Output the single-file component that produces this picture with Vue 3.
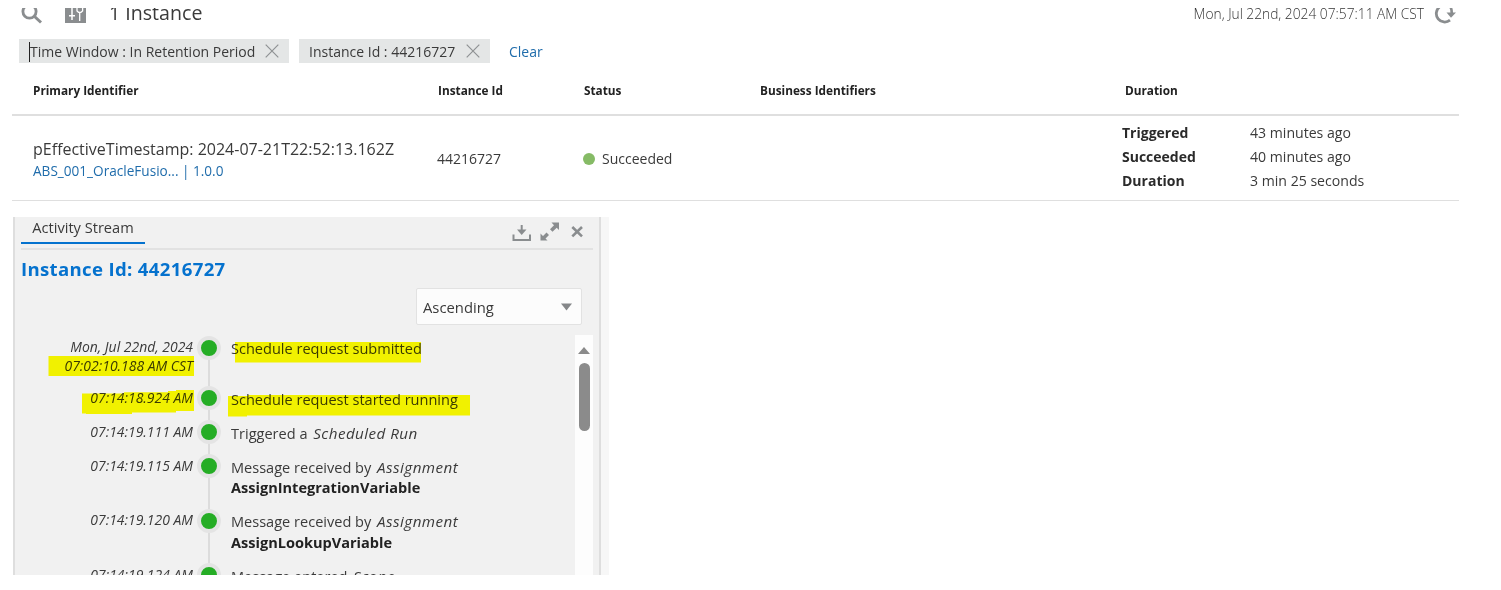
<template>
    <div class="page">
        <header class="topbar">
            <svg class="ico-search" width="22" height="24" viewBox="0 0 22 24">
                <circle cx="8.5" cy="7.5" r="6.600" fill="none" stroke="#8a8d8f" stroke-width="2.800" />
                <path d="M13 12L20 18.500" stroke="#8a8d8f" stroke-width="3" />
            </svg>
            <svg class="ico-filter" width="22" height="24" viewBox="0 0 22 24">
                <rect x="0" y="0" width="21" height="19" fill="#8a8d8f" />
                <path d="M7 0V16M4 11.700H10" fill="none" stroke="#fff" stroke-width="1.500" />
                <path d="M14.700 8V17M12 3V7L13.500 8.300H16L17.600 7V3" fill="none" stroke="#fff" stroke-width="1.300" />
            </svg>
            <h1 class="title">1 Instance</h1>
            <span class="now">Mon, Jul 22nd, 2024 07:57:11 AM CST</span>
            <svg class="ico-refresh" width="24" height="24" viewBox="0 0 24 24">
                <path d="M6.500 3A8.200 8.200 0 1 0 17 16.200" fill="none" stroke="#8a8d8f" stroke-width="2.800" />
                <path d="M16.500 2Q19 4 18.700 10" fill="none" stroke="#8a8d8f" stroke-width="2.600" />
                <path d="M13.500 8.500H23L18 13.800Z" fill="#8a8d8f" />
            </svg>
        </header>

        <div class="filters">
            <div v-for="(f, i) in filters" :key="f" class="chip" :class="{ focused: i === 0 }">
                <span>{{ f }}</span>
                <svg width="14" height="14" viewBox="0 0 14 14">
                    <path d="M.7.7L13.300 13.300M13.300.7L.7 13.300" stroke="#8f9294" stroke-width="1.200" />
                </svg>
            </div>
            <a class="clear">Clear</a>
        </div>

        <section class="table">
            <div class="row head">
                <span v-for="h in headers" :key="h">{{ h }}</span>
            </div>
            <div class="row body">
                <div class="primary">
                    <div class="ident">pEffectiveTimestamp: 2024-07-21T22:52:13.162Z</div>
                    <div class="flow">ABS_001_OracleFusio... | 1.0.0</div>
                </div>
                <div class="iid">44216727</div>
                <div class="status"><i></i><span>Succeeded</span></div>
                <div></div>
                <dl class="durations">
                    <template v-for="d in durations" :key="d.label">
                        <dt>{{ d.label }}</dt>
                        <dd>{{ d.value }}</dd>
                    </template>
                </dl>
            </div>
        </section>

        <section class="panel">
            <div class="panel-main">
                <div class="tabs">
                    <span class="tab"><span>Activity Stream</span></span>
                    <svg class="tools" width="74" height="22" viewBox="0 0 74 22">
                        <g fill="none" stroke="#8a8d8f" stroke-width="2">
                            <path d="M1.500 12.500V18H18V12.500" />
                            <path d="M9.700 3V10" />
                        </g>
                        <path d="M5 7.500H14.500L9.700 13Z" fill="#8a8d8f" />
                        <path d="M39.500 0.500H47V8L44.700 5.700L40.500 9.800L38 7.300L42 3.200Z" fill="#8a8d8f" />
                        <path d="M28.500 11.500V18.500H35.500L33.500 16.500L37 13L34.500 10.500L31 14Z" fill="#8a8d8f" />
                        <path d="M60.300 5L70 14.400M70 5L60.300 14.400" stroke="#8a8d8f" stroke-width="2.600" />
                    </svg>
                </div>
                <h2 class="heading">Instance Id: 44216727</h2>
                <div class="select">
                    <span>Ascending</span>
                    <svg width="11" height="8" viewBox="0 0 11 8"><path d="M0 0.500H11L5.500 7.500Z" fill="#858789" /></svg>
                </div>
                <div class="stream">
                    <ul class="events">
                        <li v-for="e in events" :key="e.time">
                            <div class="time"><div v-if="e.date">{{ e.date }}</div>{{ e.time }}</div>
                            <div class="rail"><i></i></div>
                            <div class="msg">{{ e.text }} <em v-if="e.kind">{{ e.kind }}</em><div v-if="e.name"><b>{{ e.name }}</b></div></div>
                        </li>
                    </ul>
                    <div class="scroll">
                        <svg width="12" height="7" viewBox="0 0 12 7"><path d="M6 0L12 7H0Z" fill="#8a8a8a" /></svg>
                        <div class="thumb"></div>
                    </div>
                </div>
            </div>
            <!-- marker strokes over the first two events -->
            <svg class="marker" width="596" height="358" viewBox="0 0 596 358">
                <g fill="#ffff00">
                    <path d="M35.500 139H181V159H35.500Z" />
                    <path d="M222 125H408V145.500H222Z" />
                    <path d="M69 176.500H111V175.300H155V174H163V173H181V194H163V195.500H119V197H73V196.500H69Z" />
                    <path d="M215 179H235V178H457V198.500H234V199.500H215Z" />
                </g>
            </svg>
        </section>
    </div>
</template>

<script setup>
import { ref } from 'vue';

const filters = ref(['Time Window : In Retention Period', 'Instance Id : 44216727'])
const headers = ['Primary Identifier', 'Instance Id', 'Status', 'Business Identifiers', 'Duration']
const durations = ref([
    { label: 'Triggered', value: '43 minutes ago' },
    { label: 'Succeeded', value: '40 minutes ago' },
    { label: 'Duration', value: '3 min 25 seconds' }
])
const events = ref([
    { date: 'Mon, Jul 22nd, 2024', time: '07:02:10.188 AM CST', text: 'Schedule request submitted' },
    { time: '07:14:18.924 AM', text: 'Schedule request started running' },
    { time: '07:14:19.111 AM', text: 'Triggered a', kind: 'Scheduled Run' },
    { time: '07:14:19.115 AM', text: 'Message received by', kind: 'Assignment', name: 'AssignIntegrationVariable' },
    { time: '07:14:19.120 AM', text: 'Message received by', kind: 'Assignment', name: 'AssignLookupVariable' },
    { time: '07:14:19.124 AM', text: 'Message entered', kind: 'Scope' }
])
</script>

<style>
body {
    background: #fff;
}
</style>

<style scoped>
.page {
    box-sizing: border-box;
    width: 1501px;
    height: 590px;
    padding-top: 8px;
    overflow: hidden;
    font-family: "Open Sans", "Noto Sans", sans-serif;
    font-size: 14px;
    color: #3a3a3a;
    white-space: nowrap;
}

.topbar {
    display: flex;
    height: 31px;
    overflow: hidden;
    padding-left: 21px;
    padding-right: 44px;
}

.topbar svg {
    flex: none;
    margin-top: -4px;
}

.ico-filter {
    margin-left: 22px;
}

.title {
    margin: -8px 0 0 22px;
    font-size: 19.6px;
    font-weight: 400;
    line-height: 26px;
}

.now {
    margin-left: auto;
    margin-top: -4px;
    font-size: 13.75px;
    font-weight: 300;
    line-height: 20px;
    color: #333;
}

.ico-refresh {
    margin-left: 9px;
}

.filters {
    display: flex;
    height: 24px;
    padding-left: 19px;
}

.chip {
    box-sizing: border-box;
    display: flex;
    align-items: center;
    width: 191px;
    height: 24px;
    margin-right: 10px;
    padding: 0 10px;
    justify-content: space-between;
    background: #e4e6e6;
    font-size: 14px;
}

.chip span {
    line-height: 25px;
}

.chip.focused {
    width: 270px;
}

.chip.focused span {
    border-left: 1px solid #222;
    margin-top: 1px;
    line-height: 20px;
}

.clear {
    margin-left: 9px;
    font-size: 14px;
    line-height: 25px;
    color: #1f6cab;
}

.table {
    margin: 0 42px 0 12px;
}

.row {
    display: grid;
    grid-template-columns: 405px 146px 176px 365px 1fr;
    padding-left: 21px;
}

.head {
    height: 51px;
    border-bottom: 2px solid #dfdfdf;
    font-size: 11.8px;
    font-weight: 700;
    line-height: 55px;
    color: #222;
}

.body {
    height: 84px;
    align-items: center;
    border-bottom: 1px solid #dfdfdf;
    font-size: 14px;
}

.primary {
    padding-top: 3px;
}

.ident {
    font-size: 16px;
    line-height: 23px;
}

.flow {
    font-size: 13.6px;
    line-height: 20px;
    color: #1f6cab;
}

.iid {
    margin-left: -1px;
    padding-top: 1px;
}

.status {
    display: flex;
    align-items: center;
    margin-left: -1px;
    padding-top: 1px;
}

.status i {
    width: 12px;
    height: 12px;
    margin-right: 7px;
    border-radius: 50%;
    background: #86bb66;
}

.durations {
    display: grid;
    grid-template-columns: 128px 1fr;
    margin: -2px 0 0 -3px;
    line-height: 24px;
}

.durations dt {
    font-weight: 700;
    color: #2a2a2a;
}

.durations dd {
    margin: 0;
    font-size: 14.100px;
}

.panel {
    position: relative;
    box-sizing: border-box;
    width: 596px;
    height: 358px;
    margin: 16px 0 0 13px;
    padding-right: 8px;
    overflow: hidden;
    background: #f7f7f7;
}

.panel-main {
    box-sizing: border-box;
    height: 358px;
    padding: 0 6px;
    border-left: 2px solid #dedede;
    border-right: 2px solid #dedede;
    background: #f1f1f1;
}

.tabs {
    display: flex;
    justify-content: space-between;
    height: 31px;
    border-bottom: 2px solid #e2e2e2;
}

.tab {
    height: 25px;
    width: 124px;
    border-bottom: 2px solid #0572ce;
    font-size: 14.600px;
    line-height: 21px;
    text-align: center;
}

.tools {
    margin: 5px 7px 0 0;
}

.heading {
    margin: 5px 0 0;
    font-size: 18.600px;
    font-weight: 700;
    line-height: 27px;
    letter-spacing: 0.330px;
    color: #0572ce;
}

.select {
    box-sizing: border-box;
    display: flex;
    align-items: center;
    justify-content: space-between;
    width: 166px;
    height: 37px;
    margin: 6px 11px 0 auto;
    padding: 1px 9px 0 6px;
    border: 1px solid #e2e2e2;
    border-radius: 2px;
    background: #fcfcfc;
    font-size: 14.800px;
}

.stream {
    display: flex;
    justify-content: space-between;
    height: 240px;
    margin-top: 10px;
    overflow: hidden;
}

.events {
    margin: 0;
    padding: 0;
    list-style: none;
}

.events li {
    display: grid;
    grid-template-columns: 172px 33px auto;
    column-gap: 0;
}

.time {
    font-size: 13.950px;
    font-style: italic;
    line-height: 18.5px;
    padding: 3px 0 10.500px;
    text-align: right;
}

.rail {
    margin-left: 4px;
    width: 24px;
    background: linear-gradient(#dcdcdc, #dcdcdc) 11px 0 / 2px 100% no-repeat;
}

.events li:first-child .rail {
    background-position: 11px 12px;
}

.rail i {
    position: relative;
    top: 0.500px;
    display: block;
    width: 16px;
    height: 16px;
    border: 4px solid #e4e4e4;
    border-radius: 50%;
    background: #25ad25;
}

.msg {
    padding: 3px 0 10.500px 5px;
    font-size: 14.550px;
    line-height: 20.5px;
}

.msg em {
    margin-left: 2px;
    font-size: 15.200px;
    line-height: 1;
    letter-spacing: 0.450px;
}

.msg b {
    color: #222;
}

.scroll {
    width: 18px;
    height: 240px;
    background: #fdfdfd;
    text-align: center;
}

.scroll svg {
    display: block;
    margin: 12px auto 9px;
}

.thumb {
    width: 11px;
    height: 68px;
    margin: 0 auto;
    border-radius: 6px;
    background: #8b8b8b;
}

.marker {
    position: absolute;
    left: 0;
    top: 0;
    mix-blend-mode: multiply;
}
</style>
